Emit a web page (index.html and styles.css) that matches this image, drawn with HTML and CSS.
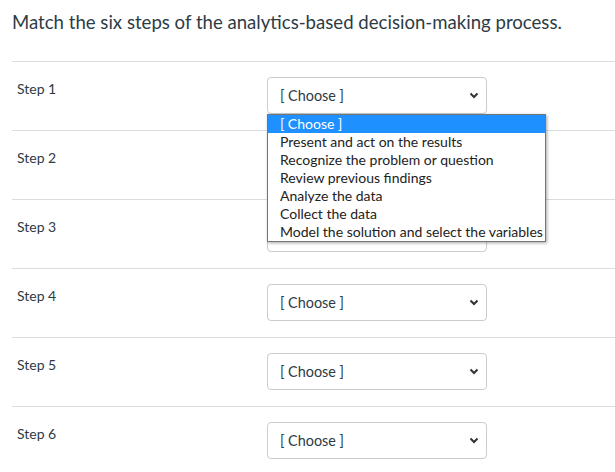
FILE: index.html
```html
<!DOCTYPE html>
<html>
<head>
<meta charset="utf-8">
<link rel="stylesheet" href="styles.css">
</head>
<body>
<div class="page">
  <h1 class="title">Match the six steps of the analytics-based decision-making process.</h1>
  <div class="rows">
    <div class="row">
      <div class="label">Step 1</div>
      <div class="select-wrap">
        <div class="select"><span>[ Choose ]</span><svg class="chev" width="10" height="7" viewBox="0 0 10 7"><path d="M1.5 1.5 L5 5 L8.5 1.5" fill="none" stroke="#333" stroke-width="2"/></svg></div>
        <ul class="menu">
          <li class="active">[ Choose ]</li>
          <li>Present and act on the results</li>
          <li>Recognize the problem or question</li>
          <li>Review previous findings</li>
          <li>Analyze the data</li>
          <li>Collect the data</li>
          <li>Model the solution and select the variables</li>
        </ul>
      </div>
    </div>
    <div class="row">
      <div class="label">Step 2</div>
      <div class="select-wrap"><div class="select"><span>[ Choose ]</span><svg class="chev" width="10" height="7" viewBox="0 0 10 7"><path d="M1.5 1.5 L5 5 L8.5 1.5" fill="none" stroke="#333" stroke-width="2"/></svg></div></div>
    </div>
    <div class="row">
      <div class="label">Step 3</div>
      <div class="select-wrap"><div class="select"><span>[ Choose ]</span><svg class="chev" width="10" height="7" viewBox="0 0 10 7"><path d="M1.5 1.5 L5 5 L8.5 1.5" fill="none" stroke="#333" stroke-width="2"/></svg></div></div>
    </div>
    <div class="row">
      <div class="label">Step 4</div>
      <div class="select-wrap"><div class="select"><span>[ Choose ]</span><svg class="chev" width="10" height="7" viewBox="0 0 10 7"><path d="M1.5 1.5 L5 5 L8.5 1.5" fill="none" stroke="#333" stroke-width="2"/></svg></div></div>
    </div>
    <div class="row">
      <div class="label">Step 5</div>
      <div class="select-wrap"><div class="select"><span>[ Choose ]</span><svg class="chev" width="10" height="7" viewBox="0 0 10 7"><path d="M1.5 1.5 L5 5 L8.5 1.5" fill="none" stroke="#333" stroke-width="2"/></svg></div></div>
    </div>
    <div class="row">
      <div class="label">Step 6</div>
      <div class="select-wrap"><div class="select"><span>[ Choose ]</span><svg class="chev" width="10" height="7" viewBox="0 0 10 7"><path d="M1.5 1.5 L5 5 L8.5 1.5" fill="none" stroke="#333" stroke-width="2"/></svg></div></div>
    </div>
  </div>
</div>
</body>
</html>
```
FILE: styles.css
```css
html, body {
  margin: 0;
  padding: 0;
  background: #fff;
}
body {
  font-family: Lato, "Noto Sans", sans-serif;
  color: #2d3b45;
}
.page {
  padding: 8px 0 0 12px;
}
.title {
  margin: 0;
  font-size: 18.6px;
  font-weight: 400;
  line-height: 28px;
  color: #2d3b45;
}
.rows {
  margin-top: 25px;
}
.row {
  display: flex;
  border-top: 1px solid #dadde0;
  height: 68px;
}
.label {
  width: 250px;
  padding: 18px 0 0 5px;
  font-size: 14px;
  line-height: 18px;
}
.select-wrap {
  position: relative;
  padding-top: 15px;
}
.select {
  box-sizing: border-box;
  width: 220px;
  height: 37px;
  border: 1px solid #c7cdd1;
  border-radius: 4px;
  display: flex;
  align-items: center;
  justify-content: space-between;
  padding: 0 7px 0 12px;
  font-size: 14.4px;
  color: #2d3b45;
}
.chev {
  display: block;
}
.menu {
  position: absolute;
  left: 0;
  top: 52px;
  margin: 0;
  padding: 0;
  list-style: none;
  background: #fff;
  border: 1px solid #767676;
  box-shadow: 1px 1px 3px rgba(0,0,0,0.35);
  font-size: 14px;
  line-height: 18px;
  color: #222;
  white-space: nowrap;
  z-index: 2;
}
.menu li {
  padding: 0 2px 0 12px;
}
.menu li.active {
  background: #1e90ff;
  color: #fff;
}
```
